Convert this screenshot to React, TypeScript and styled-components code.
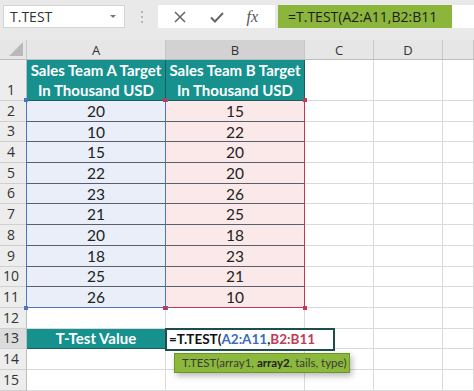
import React from 'react'
import styled, { createGlobalStyle, css } from 'styled-components'

const GlobalStyle = createGlobalStyle`
  html, body {
    margin: 0;
    padding: 0;
    background: #fff;
    overflow: hidden;
  }
  body {
    font-family: Lato, 'Open Sans', sans-serif;
    color: #222;
  }
`

const BLUE = '#4a78c0'
const RED = '#c23a55'
const TEAL = '#16918e'
const ROW_H = 20.7

const Sheet = styled.div`
  width: 474px;
  height: 391px;
  overflow: hidden;
  background: #fff;
`

const TopBar = styled.div`
  height: 40px;
  background: #e9e9e9;
  display: flex;
  align-items: flex-start;
  padding: 5px 0 0 3px;
  box-sizing: border-box;
`

const NameBox = styled.div`
  width: 122px;
  height: 23px;
  background: #fff;
  border: 1px solid #d4d4d4;
  box-sizing: border-box;
  display: flex;
  align-items: center;
  justify-content: space-between;
  padding: 0 8px 0 6px;
  font-family: 'Open Sans', sans-serif;
  font-size: 14px;
  color: #333;
`

const Caret = styled.span`
  width: 0;
  height: 0;
  border-left: 3px solid transparent;
  border-right: 3px solid transparent;
  border-top: 3px solid #777;
`

const Dots = styled.div`
  width: 33px;
  height: 23px;
  display: flex;
  flex-direction: column;
  align-items: center;
  justify-content: center;
  gap: 3px;
  span {
    width: 2px;
    height: 2px;
    background: #b5b5b5;
  }
`

const FxButtons = styled.div`
  width: 117px;
  height: 23px;
  background: #fff;
  display: flex;
  align-items: center;
  justify-content: space-around;
  padding: 0 6px 0 4px;
  box-sizing: border-box;
  color: #6a6a6a;
`

const FxLabel = styled.span`
  font-family: 'Liberation Serif', serif;
  font-style: italic;
  font-size: 16px;
  color: #555;
`

const FormulaInput = styled.div`
  margin-left: 3px;
  width: 174px;
  height: 23px;
  background: #8cb53b;
  display: flex;
  align-items: center;
  padding-left: 10px;
  box-sizing: border-box;
  font-family: 'Open Sans', sans-serif;
  font-size: 14px;
  color: #1c1c1c;
`

const FormulaRest = styled.div`
  flex: 1;
  height: 23px;
  background: #fff;
`

const Grid = styled.div`
  display: grid;
  grid-template-columns: 27px 139px 139px 69px 69px 31px;
  grid-template-rows: 20px 41px repeat(14, ${ROW_H}px);
`

type Kind = 'corner' | 'colhead' | 'rowhead' | 'teal' | 'blue' | 'pink' | 'empty' | 'edit'

const Cell = styled.div<{ $kind: Kind; $active?: boolean; $last?: boolean }>`
  position: relative;
  box-sizing: border-box;
  display: flex;
  align-items: center;
  justify-content: center;
  font-size: 15.5px;
  border-right: 1px solid #dadada;
  border-bottom: 1px solid #dadada;
  background: #fff;

  ${p => p.$kind === 'corner' && css`
    background: #e6e6e6;
    border-right: 1px solid #c6c6c6;
    border-bottom: 1px solid #bdbdbd;
  `}
  ${p => p.$kind === 'colhead' && css`
    background: ${p.$active ? '#d2d2d2' : '#e6e6e6'};
    border-right: 1px solid #c6c6c6;
    border-bottom: 1px solid #bdbdbd;
    font-family: 'Open Sans', sans-serif;
    font-size: 13px;
    color: #333;
  `}
  ${p => p.$kind === 'rowhead' && css`
    background: ${p.$active ? '#dcdcdc' : '#ededed'};
    border-right: 1px solid #bdbdbd;
    border-bottom: 1px solid #d0d0d0;
    font-family: 'Open Sans', sans-serif;
    font-size: 14px;
    color: #333;
    align-items: flex-end;
    padding-bottom: 1px;
  `}
  ${p => p.$kind === 'teal' && css`
    background: ${TEAL};
    color: #fff;
    font-weight: 700;
    font-size: 15px;
    line-height: 20px;
    text-align: center;
    border-right: 1px solid #1d5c5a;
    border-bottom: 1px solid #1d5c5a;
  `}
  ${p => p.$kind === 'blue' && css`
    background: #e9eef8;
    border-left: 1px solid ${BLUE};
    border-right: 1px solid ${BLUE};
    border-bottom: 1px solid ${p.$last ? BLUE : '#56606c'};
    margin-left: -1px;
  `}
  ${p => p.$kind === 'pink' && css`
    background: #fbe9ea;
    border-right: 1px solid ${RED};
    border-bottom: 1px solid ${p.$last ? RED : '#56606c'};
  `}
  ${p => p.$kind === 'edit' && css`
    justify-content: flex-start;
    overflow: visible;
    z-index: 2;
  `}
`

const RowNum = styled.span`
  width: 100%;
  text-align: center;
  padding-right: 4px;
`

const Handle = styled.span<{ $color: string; $pos: 'tl' | 'tr' | 'bl' | 'br' }>`
  position: absolute;
  width: 4px;
  height: 4px;
  background: ${p => p.$color};
  ${p => (p.$pos[0] === 't' ? 'top: -3px;' : 'bottom: -3px;')}
  ${p => (p.$pos[1] === 'l' ? 'left: -3px;' : 'right: -3px;')}
  z-index: 3;
`

const Editor = styled.div`
  position: absolute;
  left: -1px;
  top: -1px;
  width: 170px;
  height: 23px;
  background: #fff;
  border: 2px solid #1f4d4c;
  box-sizing: border-box;
  display: flex;
  align-items: center;
  padding-left: 2px;
  font-size: 13.5px;
  font-weight: 700;
  color: #111;
  white-space: nowrap;
`

const Ref = styled.span<{ $color: string }>`
  color: ${p => p.$color};
`

const Tip = styled.div`
  position: absolute;
  left: 7px;
  top: 23px;
  width: 176px;
  height: 20px;
  background: #8cb83c;
  border: 1px solid #6c9428;
  box-sizing: border-box;
  box-shadow: 2px 3px 6px rgba(0, 0, 0, 0.28);
  display: flex;
  align-items: center;
  padding-left: 7px;
  font-family: Lato, sans-serif;
  font-size: 11.5px;
  font-weight: 400;
  color: #3a3a3a;
  white-space: nowrap;
  b {
    color: #222;
    font-weight: 700;
  }
`

const colA = [20, 10, 15, 22, 23, 21, 20, 18, 25, 26]
const colB = [15, 22, 20, 20, 26, 25, 18, 23, 21, 10]

function CornerTriangle() {
  return (
    <svg width="14" height="14" viewBox="0 0 14 14" style={{ position: 'absolute', right: 3, bottom: 3 }}>
      <polygon points="14,0 14,14 0,14" fill="#b9b9b9" />
    </svg>
  )
}

function EmptyTail() {
  return (
    <>
      <Cell $kind="empty" />
      <Cell $kind="empty" />
      <Cell $kind="empty" />
    </>
  )
}

export default function App() {
  const lastIdx = colA.length - 1
  return (
    <Sheet>
      <GlobalStyle />
      <TopBar>
        <NameBox>
          T.TEST
          <Caret />
        </NameBox>
        <Dots>
          <span />
          <span />
          <span />
        </Dots>
        <FxButtons>
          <svg width="14" height="14" viewBox="0 0 14 14">
            <path d="M2 2 L12 12 M12 2 L2 12" stroke="#666" strokeWidth="1.5" />
          </svg>
          <svg width="16" height="14" viewBox="0 0 16 14">
            <path d="M2 7.5 L6 11.5 L14 3" stroke="#666" strokeWidth="2" fill="none" />
          </svg>
          <FxLabel>fx</FxLabel>
        </FxButtons>
        <FormulaInput>=T.TEST(A2:A11,B2:B11</FormulaInput>
        <FormulaRest />
      </TopBar>
      <Grid>
        <Cell $kind="corner">
          <CornerTriangle />
        </Cell>
        <Cell $kind="colhead">A</Cell>
        <Cell $kind="colhead" $active>B</Cell>
        <Cell $kind="colhead">C</Cell>
        <Cell $kind="colhead">D</Cell>
        <Cell $kind="colhead" />

        <Cell $kind="rowhead"><RowNum>1</RowNum></Cell>
        <Cell $kind="teal">Sales Team A Target<br />In Thousand USD</Cell>
        <Cell $kind="teal">Sales Team B Target<br />In Thousand USD</Cell>
        <EmptyTail />

        {colA.map((a, i) => (
          <React.Fragment key={i}>
            <Cell $kind="rowhead"><RowNum>{i + 2}</RowNum></Cell>
            <Cell $kind="blue" $last={i === lastIdx}>
              {a}
              {i === 0 && <Handle $color={BLUE} $pos="tl" />}
              {i === 0 && <Handle $color={BLUE} $pos="tr" />}
              {i === lastIdx && <Handle $color={BLUE} $pos="bl" />}
              {i === lastIdx && <Handle $color={BLUE} $pos="br" />}
            </Cell>
            <Cell $kind="pink" $last={i === lastIdx}>
              {colB[i]}
              {i === 0 && <Handle $color={RED} $pos="tl" />}
              {i === 0 && <Handle $color={RED} $pos="tr" />}
              {i === lastIdx && <Handle $color={RED} $pos="bl" />}
              {i === lastIdx && <Handle $color={RED} $pos="br" />}
            </Cell>
            <EmptyTail />
          </React.Fragment>
        ))}

        <Cell $kind="rowhead"><RowNum>12</RowNum></Cell>
        <Cell $kind="empty" />
        <Cell $kind="empty" />
        <EmptyTail />

        <Cell $kind="rowhead" $active><RowNum>13</RowNum></Cell>
        <Cell $kind="teal">T-Test Value</Cell>
        <Cell $kind="edit">
          <Editor>
            =T.TEST(<Ref $color="#3a6cc0">A2:A11</Ref>,<Ref $color={RED}>B2:B11</Ref>
            <Tip>
              T.TEST(array1,&nbsp;<b>array2</b>, tails, type)
            </Tip>
          </Editor>
        </Cell>
        <EmptyTail />

        <Cell $kind="rowhead"><RowNum>14</RowNum></Cell>
        <Cell $kind="empty" />
        <Cell $kind="empty" />
        <EmptyTail />

        <Cell $kind="rowhead"><RowNum>15</RowNum></Cell>
        <Cell $kind="empty" />
        <Cell $kind="empty" />
        <EmptyTail />
      </Grid>
    </Sheet>
  )
}
